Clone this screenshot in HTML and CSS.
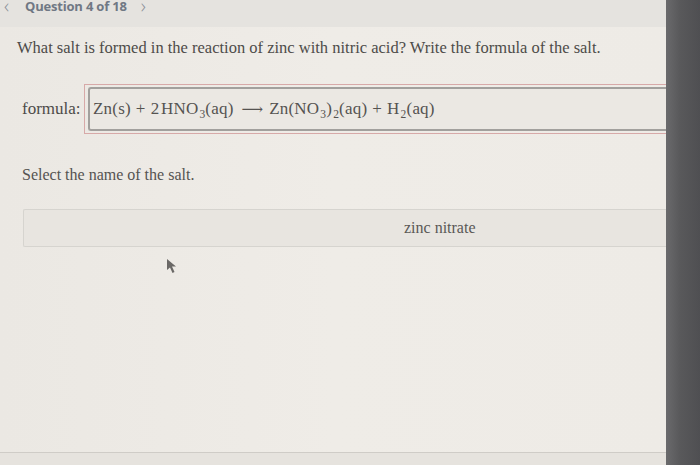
FILE: index.html
```html
<!DOCTYPE html>
<html>
<head>
<meta charset="utf-8">
<link rel="stylesheet" href="styles.css">
</head>
<body>
<div class="screen">
  <div class="main">
    <div class="topbar">
      <span class="chev">&lsaquo;</span>
      <span class="qnum">Question 4 of 18</span>
      <span class="chev right">&rsaquo;</span>
    </div>
    <div class="content">
      <p class="question">What salt is formed in the reaction of zinc with nitric acid? Write the formula of the salt.</p>
      <div class="formula-row">
        <span class="label">formula:</span>
        <div class="outer">
          <div class="inner">
            <span class="math">Zn(s)<span class="op">+</span>2&#8202;HNO<sub>3</sub>(aq)<span class="arrow">&#10230;</span>Zn(NO<sub>3</sub>)<sub>2</sub>(aq)<span class="op">+</span>H<sub>2</sub>(aq)</span>
          </div>
        </div>
      </div>
      <p class="select-label">Select the name of the salt.</p>
      <div class="select">zinc nitrate</div>
      <div class="spacer"></div>
      <div class="bottomline"></div>
    </div>
    <svg class="cursor" width="12" height="16" viewBox="0 0 12 16"><path d="M1 1 L1 12 L4 9.5 L6.5 15 L8.5 14 L6 8.5 L10 8.5 Z" fill="#6a6866"/></svg>
  </div>
  <div class="bezel"></div>
</div>
</body>
</html>
```
FILE: styles.css
```css
html, body { margin: 0; padding: 0; }
body { width: 700px; height: 465px; overflow: hidden; background: #5b5b5d; }
.screen { display: flex; width: 700px; height: 465px; }
.main { position: relative; width: 666px; height: 465px; display: flex; flex-direction: column;
  background: linear-gradient(90deg, #ebe8e3 0%, #efece7 50%, #eeebe6 100%); }
.bezel { flex: 1; background: linear-gradient(90deg, #6a6a6c 0%, #59595b 40%, #4f4f52 100%); }
.topbar { height: 27px; background: #e5e3df; display: flex; align-items: flex-start; font-family: "Open Sans", sans-serif; color: #707884; }
.chev { font-size: 20px; line-height: 12px; margin-left: 4px; color: #8a9098; font-weight: 300; }
.chev.right { margin-left: 14px; }
.qnum { font-weight: 700; font-size: 13px; line-height: 12px; margin-left: 16px; letter-spacing: -0.2px; }
.content { flex: 1; display: flex; flex-direction: column; font-family: "Liberation Serif", "Times New Roman", serif; color: #4d4b49; }
.question { margin: 11px 0 0 17px; font-size: 16.5px; line-height: 20px; }
.formula-row { display: flex; align-items: center; margin-top: 26px; }
.label { font-size: 17px; margin-left: 22px; width: 62px; }
.outer { flex: 1; height: 44px; border: 1px solid #d7a9a8; border-right: none; padding: 2px 0 2px 3px; display: flex; }
.inner { flex: 1; border: 2px solid #a2a09d; border-right: none; border-radius: 3px 0 0 3px; display: flex; align-items: center; padding-left: 3px; background: #ebe8e3; }
.math { font-size: 17px; color: #555351; white-space: nowrap; letter-spacing: 0.2px; }
.math sub { font-size: 11.5px; vertical-align: -4px; line-height: 0; margin-left: 1px; }
.op { margin: 0 5px; }
.arrow { display: inline-block; font-family: "DejaVu Serif", serif; font-size: 15px; margin: 0 6px 0 8px; }
.select-label { margin: 31px 0 0 22px; font-size: 16px; line-height: 20px; color: #555351; }
.select { margin: 24px 0 0 23px; height: 36px; border: 1px solid #d6d4cf; border-right: none; border-radius: 2px 0 0 2px; background: #e8e5e0;
  font-size: 16px; color: #5a5856; line-height: 35px; padding-left: 380px; }
.spacer { flex: 1; }
.bottomline { height: 12px; border-top: 1px solid #cfccc7; background: #e6e3de; }
.cursor { position: absolute; left: 166px; top: 258px; }
```
